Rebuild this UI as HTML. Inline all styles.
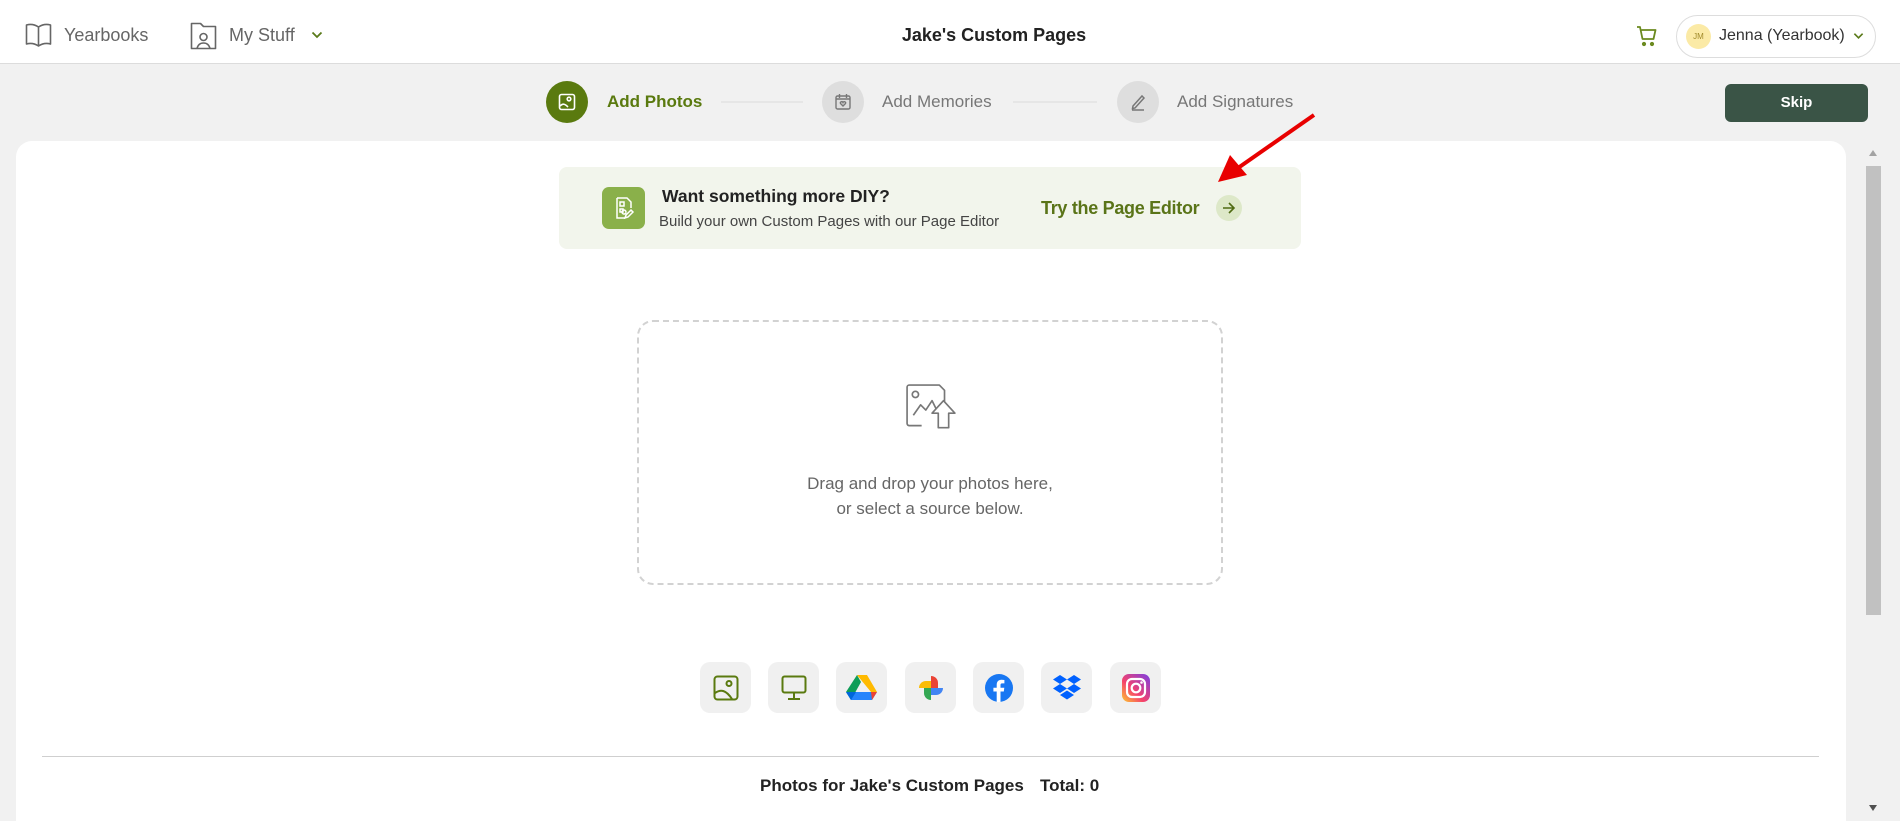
<!DOCTYPE html>
<html style="width:1900px;height:821px;overflow:hidden"><head><meta charset="utf-8"><style>
*{box-sizing:border-box;margin:0;padding:0}
body{width:1900px;height:821px;overflow:hidden;background:#f1f1f1;font-family:"Liberation Sans",Arial,sans-serif;position:relative;color:#222}
.abs{position:absolute}
.hdr{left:0;top:0;width:1900px;height:64px;background:#fff;border-bottom:1px solid #dcdcdc}
.nav{font-size:18px;color:#666}
.step{font-size:17px;color:#777}
.circ{border-radius:50%;width:42px;height:42px;background:#dedede;display:flex;align-items:center;justify-content:center}
.line{height:2px;background:#e6e6e6}
.src{width:51px;height:51px;border-radius:10px;background:#f0f0f0;display:flex;align-items:center;justify-content:center;top:662px}
</style></head><body>
<div class="abs hdr"></div>
<svg class="abs" style="left:25px;top:22px" width="27" height="26" viewBox="0 0 27 26" fill="none" stroke="#666" stroke-width="1.6" stroke-linejoin="round"><path d="M13.5 5C9 2 5 2 1.5 3v19c3.5-1 7.5-1 12 2 4.5-3 8.5-3 12-2V3c-3.5-1-7.5-1-12 2zM13.5 5v19"/></svg>
<div class="abs nav" style="left:64px;top:25px">Yearbooks</div>
<svg class="abs" style="left:190px;top:22px" width="27" height="28" viewBox="0 0 27 28" fill="none" stroke="#666" stroke-width="1.6" stroke-linejoin="round"><path d="M1.5 1.5h9l3 3h12v22h-24z"/><circle cx="13.5" cy="15" r="3.5"/><path d="M7 26.5c1-4 3.5-5.5 6.5-5.5s5.5 1.5 6.5 5.5"/></svg>
<div class="abs nav" style="left:229px;top:25px">My Stuff</div>
<svg class="abs" style="left:311px;top:31px" width="12" height="8" viewBox="0 0 12 8" fill="none" stroke="#5a7a1a" stroke-width="1.8"><path d="M1.5 1.5l4.5 4.5 4.5-4.5"/></svg>
<div class="abs" style="left:0;width:1988px;text-align:center;top:25px;font-size:18px;font-weight:bold;color:#222">Jake's Custom Pages</div>
<svg class="abs" style="left:1636px;top:25px" width="22" height="22" viewBox="0 0 22 22" fill="none" stroke="#6b8a1f" stroke-width="1.8" stroke-linejoin="round"><path d="M1 2h3l2.5 12h11l2-9H5.5"/><circle cx="8" cy="19" r="1.2" fill="#6b8a1f"/><circle cx="16" cy="19" r="1.2" fill="#6b8a1f"/></svg>
<div class="abs" style="left:1676px;top:15px;width:200px;height:43px;border:1px solid #ddd;border-radius:22px;background:#fff"></div>
<div class="abs" style="left:1686px;top:24px;width:25px;height:25px;border-radius:50%;background:#fbeaa6;font-size:8px;color:#a08a2a;text-align:center;line-height:25px">JM</div>
<div class="abs" style="left:1719px;top:27px;font-size:16px;color:#333">Jenna (Yearbook)</div>
<svg class="abs" style="left:1853px;top:32px" width="11" height="8" viewBox="0 0 12 8" fill="none" stroke="#5a7a1a" stroke-width="1.8"><path d="M1.5 1.5l4.5 4.5 4.5-4.5"/></svg>

<div class="abs circ" style="left:546px;top:81px;background:#5a7a0f">
<svg width="18" height="18" viewBox="0 0 18 18" fill="none" stroke="#fff" stroke-width="1.6"><rect x="1.5" y="1.5" width="15" height="15" rx="2"/><circle cx="11" cy="6" r="1.8"/><path d="M2 13c3-3 5-2 8 1"/></svg></div>
<div class="abs step" style="left:607px;top:92px;color:#5a7a0f;font-weight:bold">Add Photos</div>
<div class="abs line" style="left:721px;top:101px;width:82px"></div>
<div class="abs circ" style="left:822px;top:81px"><svg width="18" height="18" viewBox="0 0 18 18" fill="none" stroke="#777" stroke-width="1.4"><rect x="2" y="3" width="14" height="13" rx="1.5"/><path d="M5.5 1v4M12.5 1v4M2 6h14M9 13l-2.5-2.5a1.3 1.3 0 012.5-1 1.3 1.3 0 012.5 1z"/></svg></div>
<div class="abs step" style="left:882px;top:92px">Add Memories</div>
<div class="abs line" style="left:1013px;top:101px;width:84px"></div>
<div class="abs circ" style="left:1117px;top:81px"><svg width="18" height="18" viewBox="0 0 18 18" fill="none" stroke="#777" stroke-width="1.5"><path d="M4 13l9-10 2 2-9 10-2.5.5zM3 17h12"/></svg></div>
<div class="abs step" style="left:1177px;top:92px">Add Signatures</div>
<div class="abs" style="left:1725px;top:84px;width:143px;height:38px;background:#3a5446;border-radius:6px;color:#fff;font-weight:bold;font-size:15px;text-align:center;line-height:38px">Skip</div>

<div class="abs" style="left:16px;top:141px;width:1830px;height:680px;background:#fff;border-radius:16px 16px 0 0"></div>
<div class="abs" style="left:1862px;top:141px;width:22px;height:680px;background:#f1f1f1"></div>
<div class="abs" style="left:1866px;top:166px;width:15px;height:449px;background:#c1c1c1"></div>
<div class="abs" style="left:1869px;top:150px;width:0;height:0;border-left:4.5px solid transparent;border-right:4.5px solid transparent;border-bottom:6px solid #a3a3a3"></div>
<div class="abs" style="left:1869px;top:805px;width:0;height:0;border-left:4.5px solid transparent;border-right:4.5px solid transparent;border-top:6px solid #505050"></div>

<div class="abs" style="left:559px;top:167px;width:742px;height:82px;background:#f2f5ec;border-radius:8px"></div>
<div class="abs" style="left:602px;top:187px;width:43px;height:42px;background:#8ab04a;border-radius:7px;display:flex;align-items:center;justify-content:center">
<svg width="24" height="24" viewBox="0 0 24 24" fill="none" stroke="#fff" stroke-width="1.5"><path d="M5 2h10l4 4v6M5 2v20h8"/><rect x="8" y="6" width="4" height="4"/><rect x="8" y="13" width="3" height="3"/><path d="M14 16a2 2 0 1 0 0 .1M13 22l1-3 5-5 2 2-5 5z"/></svg></div>
<div class="abs" style="left:662px;top:186px;font-size:17.5px;font-weight:bold;color:#222">Want something more DIY?</div>
<div class="abs" style="left:659px;top:213px;font-size:15px;color:#444">Build your own Custom Pages with our Page Editor</div>
<div class="abs" style="left:1041px;top:198px;font-size:18px;font-weight:bold;color:#5a7418;letter-spacing:-0.3px">Try the Page Editor</div>
<div class="abs" style="left:1216px;top:195px;width:26px;height:26px;border-radius:50%;background:#dde8c8;display:flex;align-items:center;justify-content:center"><svg width="14" height="12" viewBox="0 0 14 12" fill="none" stroke="#4f6b12" stroke-width="1.6"><path d="M1 6h11M7 1l5 5-5 5"/></svg></div>
<svg class="abs" style="left:1200px;top:100px" width="130" height="100" viewBox="1200 100 130 100"><line x1="1314" y1="115" x2="1238" y2="168" stroke="#e80000" stroke-width="4"/><polygon points="1218,182 1230,155 1247,175" fill="#e80000"/></svg>

<div class="abs" style="left:637px;top:320px;width:586px;height:265px;border:2px dashed #d2d2d2;border-radius:16px"></div>
<svg class="abs" style="left:905px;top:383px" width="52" height="52" viewBox="0 0 50 50" fill="none" stroke="#777" stroke-width="1.6" stroke-linejoin="round"><path d="M16 41H4a2 2 0 01-2-2V4a2 2 0 012-2h29l5 5v11"/><circle cx="10" cy="11" r="3"/><path d="M8 31l7-10 5 5 6-9 4 8"/><path d="M37 17L26 29h6v14h10V29h6z"/></svg>
<div class="abs" style="left:637px;width:586px;text-align:center;top:471px;font-size:17px;color:#666;line-height:25px">Drag and drop your photos here,<br>or select a source below.</div>

<div class="abs src" style="left:700px"><svg width="26" height="26" viewBox="0 0 26 26" fill="none" stroke="#5a7a0f" stroke-width="2"><rect x="1.5" y="1.5" width="23" height="23" rx="3"/><circle cx="16" cy="8.5" r="2.5"/><path d="M2 18c6-4 11-3 17 6"/></svg></div>
<div class="abs src" style="left:768px"><svg width="26" height="26" viewBox="0 0 26 26" fill="none" stroke="#5a7a0f" stroke-width="2"><rect x="1.5" y="1.5" width="23" height="16" rx="2"/><path d="M13 17.5v6M7 24h12"/></svg></div>
<div class="abs src" style="left:836px"><svg width="32" height="28" viewBox="0 0 32 28"><polygon points="11,1 21,1 31,18 25,18" fill="#ffba00"/><polygon points="11,1 15,8 5,26 0,18" fill="#0f9d58"/><polygon points="0,18 5,26 26,26 31,18" fill="#2684fc"/><polygon points="25,18 31,18 26,26" fill="#ea4335"/><polygon points="0,18 10,18 5,26" fill="#0066da"/></svg></div>
<div class="abs src" style="left:905px"><svg width="28" height="28" viewBox="0 0 28 28"><path d="M14 14V2a7 7 0 017 7v5z" fill="#ea4335"/><path d="M14 14h12a7 7 0 01-7 7h-5z" fill="#4285f4"/><path d="M14 14v12a7 7 0 01-7-7v-5z" fill="#34a853"/><path d="M14 14H2a7 7 0 017-7h5z" fill="#fbbc04"/></svg></div>
<div class="abs src" style="left:973px"><svg width="28" height="28" viewBox="0 0 28 28"><circle cx="14" cy="14" r="14" fill="#1877f2"/><path d="M15.5 28V17.5h3.3l.5-3.8h-3.8v-2.4c0-1.1.3-1.9 1.9-1.9h2V6a27 27 0 00-2.9-.2c-2.9 0-4.8 1.8-4.8 5v2.9H8.4v3.8h3.3V28z" fill="#fff"/></svg></div>
<div class="abs src" style="left:1041px"><svg width="30" height="28" viewBox="0 0 30 28" fill="#0061ff"><path d="M8 1l7 4.5-7 4.5-7-4.5zM22 1l7 4.5-7 4.5-7-4.5zM1 14.5L8 10l7 4.5L8 19zM29 14.5L22 10l-7 4.5 7 4.5zM8 21l7-4.5 7 4.5-7 4.5z"/></svg></div>
<div class="abs src" style="left:1110px"><svg width="28" height="28" viewBox="0 0 28 28"><defs><linearGradient id="ig" x1="0" y1="1" x2="1" y2="0"><stop offset="0" stop-color="#fdc830"/><stop offset=".4" stop-color="#f5426c"/><stop offset="1" stop-color="#7b3fe4"/></linearGradient></defs><rect width="28" height="28" rx="7" fill="url(#ig)"/><rect x="5" y="5" width="18" height="18" rx="5" fill="none" stroke="#fff" stroke-width="2.2"/><circle cx="14" cy="14" r="4.3" fill="none" stroke="#fff" stroke-width="2.2"/><circle cx="19.5" cy="8.5" r="1.3" fill="#fff"/></svg></div>

<div class="abs" style="left:42px;top:756px;width:1777px;height:1px;background:#cfcfcf"></div>
<div class="abs" style="left:760px;top:776px;font-size:17px;font-weight:bold;color:#222">Photos for Jake's Custom Pages</div>
<div class="abs" style="left:1040px;top:776px;font-size:17px;font-weight:bold;color:#222">Total: 0</div>
</body></html>
